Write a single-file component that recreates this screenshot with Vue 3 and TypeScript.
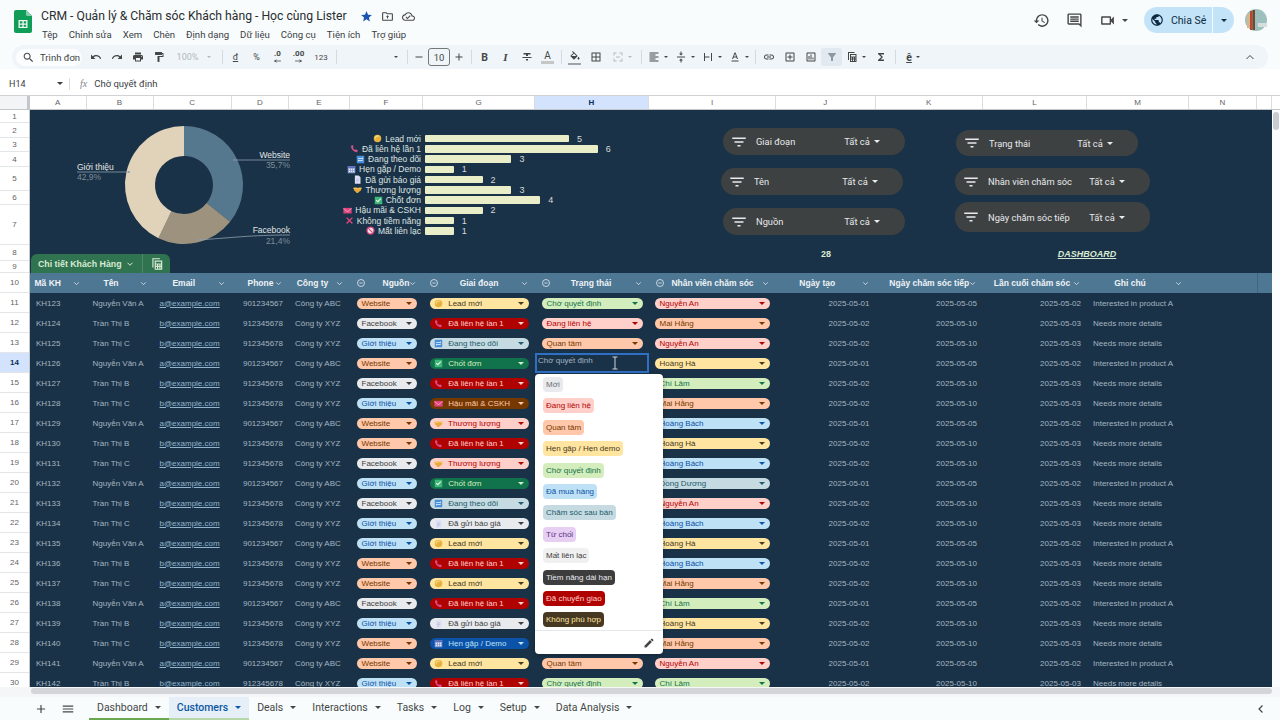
<script setup lang="ts">
import { computed } from "vue";

interface ToolItem {
  icon?: string;
  text?: string;
  caret?: boolean;
  sep?: boolean;
  width?: number;
  cls?: string;
  arrow?: string;
}

interface Customer {
  id: string;
  name: string;
  who: "A" | "B" | "C";
  source: string;
  stage: string;
  status: string;
  staff: string;
}

const icons: Record<string, string> = {
  search: "M15.5 14h-.79l-.28-.27C15.41 12.59 16 11.11 16 9.5 16 5.91 13.09 3 9.5 3S3 5.91 3 9.5 5.91 16 9.5 16c1.61 0 3.09-.59 4.23-1.57l.27.28v.79l5 4.99L20.49 19l-4.99-5zm-6 0C7.01 14 5 11.99 5 9.5S7.01 5 9.5 5 14 7.01 14 9.5 11.99 14 9.5 14z",
  undo: "M12.5 8c-2.65 0-5.05.99-6.9 2.6L2 7v9h9l-3.62-3.62c1.39-1.16 3.16-1.88 5.12-1.88 3.54 0 6.55 2.31 7.6 5.5l2.37-.78C21.08 11.03 17.15 8 12.5 8z",
  redo: "M18.4 10.6C16.55 8.99 14.15 8 11.5 8c-4.65 0-8.58 3.03-9.96 7.22L3.9 16c1.05-3.19 4.05-5.5 7.6-5.5 1.95 0 3.73.72 5.12 1.88L13 16h9V7l-3.6 3.6z",
  print: "M19 8H5c-1.66 0-3 1.34-3 3v6h4v4h12v-4h4v-6c0-1.66-1.34-3-3-3zm-3 11H8v-5h8v5zm3-7c-.55 0-1-.45-1-1s.45-1 1-1 1 .45 1 1-.45 1-1 1zm-1-9H6v4h12V3z",
  paint: "M18 4V3c0-.55-.45-1-1-1H5c-.55 0-1 .45-1 1v4c0 .55.45 1 1 1h12c.55 0 1-.45 1-1V6h1v4H9v11c0 .55.45 1 1 1h2c.55 0 1-.45 1-1v-9h8V4h-3z",
  star: "M12 17.27L18.18 21l-1.64-7.03L22 9.24l-7.19-.61L12 2 9.19 8.63 2 9.24l5.46 4.73L5.82 21z",
  folder: "M20 6h-8l-2-2H4c-1.1 0-2 .9-2 2v12c0 1.1.9 2 2 2h16c1.1 0 2-.9 2-2V8c0-1.1-.9-2-2-2zm0 12H4V6h5.17l2 2H20v10zM12 9.5l-3 3h2v3h2v-3h2z",
  cloud: "M19.35 10.04C18.67 6.59 15.64 4 12 4 9.11 4 6.6 5.64 5.35 8.04 2.34 8.36 0 10.91 0 14c0 3.31 2.69 6 6 6h13c2.76 0 5-2.24 5-5 0-2.64-2.05-4.78-4.65-4.96zM19 18H6c-2.21 0-4-1.79-4-4 0-2.05 1.53-3.76 3.56-3.97l1.07-.11.5-.95C8.08 7.14 9.94 6 12 6c2.62 0 4.88 1.86 5.39 4.43l.3 1.5 1.53.11c1.56.1 2.78 1.41 2.78 2.96 0 1.65-1.35 3-3 3zm-9-3.82l-2.09-2.09L6.5 13.5 10 17l6.01-6.01-1.41-1.41z",
  history: "M13 3c-4.97 0-9 4.03-9 9H1l3.89 3.89.07.14L9 12H6c0-3.87 3.13-7 7-7s7 3.13 7 7-3.13 7-7 7c-1.93 0-3.68-.79-4.94-2.06l-1.42 1.42C8.27 19.99 10.51 21 13 21c4.97 0 9-4.03 9-9s-4.03-9-9-9zm-1 5v5l4.28 2.54.72-1.21-3.5-2.08V8H12z",
  comment: "M21.99 4c0-1.1-.89-2-1.99-2H4c-1.1 0-2 .9-2 2v12c0 1.1.9 2 2 2h14l4 4-.01-18zM20 4v13.17L18.83 16H4V4h16zM6 12h12v2H6zm0-3h12v2H6zm0-3h12v2H6z",
  video: "M15 8v8H5V8h10m1-2H4c-.55 0-1 .45-1 1v10c0 .55.45 1 1 1h12c.55 0 1-.45 1-1v-3.5l4 4v-11l-4 4V7c0-.55-.45-1-1-1z",
  globe: "M12 2C6.48 2 2 6.48 2 12s4.48 10 10 10 10-4.48 10-10S17.52 2 12 2zm-1 17.93c-3.95-.49-7-3.85-7-7.93 0-.62.08-1.21.21-1.79L9 15v1c0 1.1.9 2 2 2v1.93zm6.9-2.54c-.26-.81-1-1.39-1.9-1.39h-1v-3c0-.55-.45-1-1-1H8v-2h2c.55 0 1-.45 1-1V7h2c1.1 0 2-.9 2-2v-.41c2.93 1.19 5 4.06 5 7.41 0 2.08-.8 3.97-2.1 5.39z",
  minus: "M19 13H5v-2h14v2z",
  plus: "M19 13h-6v6h-2v-6H5v-2h6V5h2v6h6v2z",
  strike: "M10 19h4v-3h-4v3zM5 4v3h5v3h4V7h5V4H5zM3 14h18v-2H3v2z",
  fill: "M16.56 8.94L7.62 0 6.21 1.41l2.38 2.38-5.15 5.15c-.59.59-.59 1.54 0 2.12l5.5 5.5c.29.29.68.44 1.06.44s.77-.15 1.06-.44l5.5-5.5c.59-.58.59-1.53 0-2.12zM5.21 10L10 5.21 14.79 10H5.21zM19 11.5s-2 2.17-2 3.5c0 1.1.9 2 2 2s2-.9 2-2c0-1.33-2-3.5-2-3.5z",
  borders: "M3 3v18h18V3H3zm8 16H5v-6h6v6zm0-8H5V5h6v6zm8 8h-6v-6h6v6zm0-8h-6V5h6v6z",
  merge: "M3 3h6v2H5v4H3zm12 0h6v6h-2V5h-4zM3 15h2v4h4v2H3zm16 0h2v6h-6v-2h4zM8 11h8v2H8z",
  align: "M15 15H3v2h12v-2zm0-8H3v2h12V7zM3 13h18v-2H3v2zm0 8h18v-2H3v2zM3 3v2h18V3H3z",
  valign: "M8 19h3v4h2v-4h3l-4-4-4 4zm8-14h-3V1h-2v4H8l4 4 4-4zM4 11v2h16v-2H4z",
  wrap: "M4 4h2v16H4zm14 0h2v16h-2zM6 11h9v2H6z",
  rotate: "M11 3h2l5 13h-2.1l-1.1-3H9.2l-1.1 3H6zm-1.1 8h4.2L12 5.6zM5 19h14v2H5z",
  link: "M3.9 12c0-1.71 1.39-3.1 3.1-3.1h4V7H7c-2.76 0-5 2.24-5 5s2.24 5 5 5h4v-1.9H7c-1.71 0-3.1-1.39-3.1-3.1zM8 13h8v-2H8v2zm9-6h-4v1.9h4c1.71 0 3.1 1.39 3.1 3.1s-1.39 3.1-3.1 3.1h-4V17h4c2.76 0 5-2.24 5-5s-2.24-5-5-5z",
  addbox: "M19 3H5c-1.1 0-2 .9-2 2v14c0 1.1.9 2 2 2h14c1.1 0 2-.9 2-2V5c0-1.1-.9-2-2-2zm0 16H5V5h14v14zM13 7h-2v4H7v2h4v4h2v-4h4v-2h-4z",
  chart: "M19 3H5c-1.1 0-2 .9-2 2v14c0 1.1.9 2 2 2h14c1.1 0 2-.9 2-2V5c0-1.1-.9-2-2-2zm0 16H5V5h14v14zM7 10h2v7H7zm4-3h2v10h-2zm4 6h2v4h-2z",
  funnel: "M4.25 5.61C6.27 8.2 10 13 10 13v6c0 .55.45 1 1 1h2c.55 0 1-.45 1-1v-6s3.72-4.8 5.74-7.39C20.25 4.95 19.78 4 18.95 4H5.04c-.83 0-1.3.95-.79 1.61z",
  table: "M4 2h13v2H6v14H4zm4 4h13v16H8zm2 2v3h9V8zm0 5v2h2v-2zm4 0v2h2v-2zm4 0v2h1v-2zm-8 4v3h2v-3zm4 0v3h2v-3zm4 0v3h1v-3z",
  sigma: "M18 4H6v2l6.5 6L6 18v2h12v-3h-7l5-5-5-5h7z",
  filterList: "M10 18h4v-2h-4v2zM3 6v2h18V6H3zm3 7h12v-2H6v2z",
  menu: "M3 18h18v-2H3v2zm0-5h18v-2H3v2zm0-7v2h18V6H3z",
  edit: "M3 17.25V21h3.75L17.81 9.94l-3.75-3.75L3 17.25zM20.71 7.04c.39-.39.39-1.02 0-1.41l-2.34-2.34c-.39-.39-1.02-.39-1.41 0l-1.83 1.83 3.75 3.75 1.83-1.83z",
};

const toolbarItems: ToolItem[] = [
  { icon: "undo" }, { icon: "redo" }, { icon: "print" }, { icon: "paint" },
  { text: "100%", width: 50, cls: "dim wide-gap", caret: true }, { sep: true },
  { text: "đ", cls: "under" }, { text: "%" }, { text: ".0", cls: "dec", arrow: "M4 2L1.500 3.500 4 5M1.500 3.500H9" }, { text: ".00", cls: "dec", arrow: "M6 2L8.500 3.500 6 5M8.500 3.500H1" }, { text: "123", cls: "small", width: 24 }, { sep: true },
  { width: 65, cls: "font-pick", caret: true }, { sep: true },
  { icon: "minus", width: 18 }, { text: "10", cls: "size" }, { icon: "plus", width: 18 }, { sep: true },
  { text: "B", cls: "bold" }, { text: "I", cls: "ital" }, { icon: "strike" }, { text: "A", cls: "color" }, { sep: true },
  { icon: "fill", cls: "filled" }, { icon: "borders" }, { icon: "merge", cls: "dim", caret: true, width: 32 }, { sep: true },
  { icon: "align", caret: true, width: 27 }, { icon: "valign", caret: true, width: 27 }, { icon: "wrap", caret: true, width: 27 }, { icon: "rotate", caret: true, width: 27 }, { sep: true },
  { icon: "link" }, { icon: "addbox" }, { icon: "chart" }, { icon: "funnel", cls: "on" }, { icon: "table", caret: true, width: 27 }, { icon: "sigma", width: 23 }, { sep: true },
  { text: "ê", cls: "bold under", caret: true, width: 30 },
];

const menus = ["Tệp", "Chỉnh sửa", "Xem", "Chèn", "Định dạng", "Dữ liệu", "Công cụ", "Tiện ích", "Trợ giúp"];
const columnLetters = ["A", "B", "C", "D", "E", "F", "G", "H", "I", "J", "K", "L", "M", "N", ""];
const dashRowHeights = [13, 15, 14, 15, 24, 14, 40, 16, 12];

// shift: độ lệch của nhãn so với giữa cột
const headers = [
  { label: "Mã KH", shift: -10.5 },
  { label: "Tên", shift: -9 },
  { label: "Email", shift: -9 },
  { label: "Phone", shift: 0 },
  { label: "Công ty", shift: -7 },
  { label: "Nguồn", chip: true, shift: 9.5 },
  { label: "Giai đoạn", chip: true, shift: 0 },
  { label: "Trạng thái", chip: true, shift: -1 },
  { label: "Nhân viên chăm sóc", chip: true, shift: 0 },
  { label: "Ngày tạo", shift: -8.5 },
  { label: "Ngày chăm sóc tiếp", shift: 0 },
  { label: "Lần cuối chăm sóc", shift: -3 },
  { label: "Ghi chú", shift: -8 },
];

// nhãn màu của dropdown, giống bảng màu mặc định của Sheets
const tones: Record<string, string> = {
  Website: "orange", Facebook: "grey", "Giới thiệu": "blue",
  "Lead mới": "yellow", "Đã liên hệ lần 1": "dred", "Đang theo dõi": "teal", "Hẹn gặp / Demo": "dblue",
  "Đã gửi báo giá": "grey", "Thương lượng": "red", "Chốt đơn": "dgreen", "Hậu mãi & CSKH": "brown",
  "Chờ quyết định": "green", "Đang liên hệ": "red", "Quan tâm": "orange",
  "Nguyễn An": "red", "Mai Hằng": "orange", "Hoàng Hà": "yellow", "Chí Lâm": "green", "Hoàng Bách": "blue", "Đồng Dương": "teal",
};

const glyphs: Record<string, { d: string; fill: string }[]> = {
  "Lead mới": [{ d: "M12 2a10 10 0 1 0 0 20 10 10 0 0 0 0-20z", fill: "#e8b13e" }, { d: "M9 4a8 8 0 0 1 9 3 9 9 0 0 0-12 8 8 8 0 0 1 3-11z", fill: "#f6d77c" }],
  "Đã liên hệ lần 1": [{ d: "M6.6 2.5l3 5-2 2.4c1.2 2.6 3.3 4.9 6 6.3l2.4-2 5 3-1.6 4c-.4.6-1 .8-1.8.7C10.400 20.600 3.500 13.500 2.600 6.400c-.1-.8.1-1.400.8-1.800z", fill: "#d6508c" }],
  "Đang theo dõi": [{ d: "M2 2h20v20H2z", fill: "#4a90d9" }, { d: "M6 8h10V6l3 3-3 3v-2H6zm12 8H8v2l-3-3 3-3v2h10z", fill: "#eef5fc" }],
  "Hẹn gặp / Demo": [{ d: "M2 3h20v19H2z", fill: "#8e9fd8" }, { d: "M2 3h20v5H2z", fill: "#5c6fb8" }, { d: "M5 10h3v3H5zm5.500 0h3v3h-3zM16 10h3v3h-3zM5 15.500h3v3H5zm5.500 0h3v3h-3zm5.500 0h3v3h-3z", fill: "#eef0fa" }],
  "Đã gửi báo giá": [{ d: "M5 1h10l5 5v17H5z", fill: "#dfe1f5" }, { d: "M8 10h9v1.500H8zm0 4h9v1.500H8zm0 4h6v1.500H8z", fill: "#a7acd8" }],
  "Thương lượng": [{ d: "M1 7h22l-2 7-8 7h-3l-7-7z", fill: "#e9a93a" }, { d: "M1 7h9l3 3 3-3h7l-1 3H2z", fill: "#f6cd6a" }],
  "Chốt đơn": [{ d: "M2 2h20v20H2z", fill: "#3fb878" }, { d: "M10 17l-5-5 1.800-1.800L10 13.400 17.200 6.200 19 8z", fill: "#f3fbf6" }],
  "Hậu mãi & CSKH": [{ d: "M1 5h22v15H1z", fill: "#e0457f" }, { d: "M1 5l11 9 11-9v2.500l-11 9-11-9z", fill: "#f6a3c3" }],
  "Không tiềm năng": [{ d: "M3 5.500L5.500 3 12 9.500 18.500 3 21 5.500 14.500 12 21 18.500 18.500 21 12 14.500 5.500 21 3 18.500 9.500 12z", fill: "#d9467f" }],
  "Mất liên lạc": [{ d: "M12 1a11 11 0 1 0 0 22 11 11 0 0 0 0-22z", fill: "#d9467f" }, { d: "M12 4.500A7.500 7.500 0 1 1 12 19.500 7.500 7.500 0 0 1 12 4.500z", fill: "#f6e3ea" }, { d: "M7.500 5.500L18.500 16.500 16.500 18.500 5.500 7.500z", fill: "#d9467f" }],
};

const barData = [
  { label: "Lead mới", value: 5 },
  { label: "Đã liên hệ lần 1", value: 6 },
  { label: "Đang theo dõi", value: 3 },
  { label: "Hẹn gặp / Demo", value: 1 },
  { label: "Đã gửi báo giá", value: 2 },
  { label: "Thương lượng", value: 3 },
  { label: "Chốt đơn", value: 4 },
  { label: "Hậu mãi & CSKH", value: 2 },
  { label: "Không tiềm năng", value: 1 },
  { label: "Mất liên lạc", value: 1 },
];

const filtersLeft = [
  { label: "Giai đoạn", cls: "shift" },
  { label: "Tên", cls: "" },
  { label: "Nguồn", cls: "shift" },
];
const filtersRight = [
  { label: "Trạng thái", cls: "short" },
  { label: "Nhân viên chăm sóc", cls: "wide" },
  { label: "Ngày chăm sóc tiếp", cls: "wide tall" },
];

const statusOptions = [
  { label: "Mới", tone: "grey" },
  { label: "Đang liên hệ", tone: "red" },
  { label: "Quan tâm", tone: "orange" },
  { label: "Hẹn gặp / Hẹn demo", tone: "yellow" },
  { label: "Chờ quyết định", tone: "green" },
  { label: "Đã mua hàng", tone: "blue" },
  { label: "Chăm sóc sau bán", tone: "teal" },
  { label: "Từ chối", tone: "purple" },
  { label: "Mất liên lạc", tone: "light" },
  { label: "Tiềm năng dài hạn", tone: "dark" },
  { label: "Đã chuyển giao", tone: "dred" },
  { label: "Không phù hợp", tone: "dbrown" },
];

const raw: [string, string, string, string][] = [
  ["Website", "Lead mới", "Chờ quyết định", "Nguyễn An"],
  ["Facebook", "Đã liên hệ lần 1", "Đang liên hệ", "Mai Hằng"],
  ["Giới thiệu", "Đang theo dõi", "Quan tâm", "Nguyễn An"],
  ["Website", "Chốt đơn", "", "Hoàng Hà"],
  ["Facebook", "Đã liên hệ lần 1", "", "Chí Lâm"],
  ["Giới thiệu", "Hậu mãi & CSKH", "", "Mai Hằng"],
  ["Website", "Thương lượng", "", "Hoàng Bách"],
  ["Website", "Đã liên hệ lần 1", "", "Hoàng Hà"],
  ["Facebook", "Thương lượng", "", "Hoàng Bách"],
  ["Giới thiệu", "Chốt đơn", "", "Đồng Dương"],
  ["Facebook", "Đang theo dõi", "", "Nguyễn An"],
  ["Giới thiệu", "Đã gửi báo giá", "", "Hoàng Bách"],
  ["Giới thiệu", "Lead mới", "", "Hoàng Hà"],
  ["Website", "Đã liên hệ lần 1", "", "Hoàng Bách"],
  ["Website", "Lead mới", "", "Mai Hằng"],
  ["Facebook", "Đã liên hệ lần 1", "", "Chí Lâm"],
  ["Giới thiệu", "Đã gửi báo giá", "", "Hoàng Hà"],
  ["Website", "Hẹn gặp / Demo", "", "Mai Hằng"],
  ["Website", "Lead mới", "Quan tâm", "Nguyễn An"],
  ["Giới thiệu", "Đã liên hệ lần 1", "Chờ quyết định", "Chí Lâm"],
];

const people = { A: "Nguyễn Văn A", B: "Trần Thị B", C: "Trần Thị C" };
const whoOrder: Customer["who"][] = ["A", "B", "C"];

const customers = computed<Customer[]>(() =>
  raw.map((r, i) => ({
    id: `KH${123 + i}`,
    who: whoOrder[i % 3],
    name: people[whoOrder[i % 3]],
    source: r[0],
    stage: r[1],
    status: r[2],
    staff: r[3],
  }))
);

const tabs = ["Dashboard", "Customers", "Deals", "Interactions", "Tasks", "Log", "Setup", "Data Analysis"];

// donut: 14 khách, bắt đầu từ 12 giờ theo chiều kim đồng hồ
const slices = computed(() => {
  const parts = [
    { value: 5, color: "#56788f" },
    { value: 3, color: "#9c927e" },
    { value: 6, color: "#e0d3ba" },
  ];
  const cx = 154, cy = 75, R = 59, r = 29;
  let acc = 0;
  return parts.map((p) => {
    const a0 = (acc / 14) * Math.PI * 2;
    acc += p.value;
    const a1 = (acc / 14) * Math.PI * 2;
    const large = a1 - a0 > Math.PI ? 1 : 0;
    const pt = (rad: number, a: number) => `${(cx + rad * Math.sin(a)).toFixed(2)} ${(cy - rad * Math.cos(a)).toFixed(2)}`;
    return {
      color: p.color,
      d: `M${pt(R, a0)}A${R} ${R} 0 ${large} 1 ${pt(R, a1)}L${pt(r, a1)}A${r} ${r} 0 ${large} 0 ${pt(r, a0)}Z`,
    };
  });
});
</script>

<template>
  <div class="app">
    <header class="topbar">
      <svg class="logo" viewBox="0 0 18 23">
        <path d="M2 0h10l6 6v15a2 2 0 0 1-2 2H2a2 2 0 0 1-2-2V2a2 2 0 0 1 2-2z" fill="#0f9d58" />
        <path d="M12 0l6 6h-4.500A1.500 1.500 0 0 1 12 4.500z" fill="#87ceac" />
        <path d="M4.500 10h9v8h-9zm1.300 1.300v2.100h2.600v-2.100zm3.900 0v2.100h2.500v-2.100zm-3.900 3.400v2h2.600v-2zm3.900 0v2h2.500v-2z" fill="#f1f8f4" />
      </svg>
      <div class="doc">
        <div class="title-line">
          <span class="doc-title">CRM - Quản lý &amp; Chăm sóc Khách hàng - Học cùng Lister</span>
          <svg class="ic star" viewBox="0 0 24 24"><path :d="icons.star" /></svg>
          <svg class="ic doc-ic" viewBox="0 0 24 24"><path :d="icons.folder" /></svg>
          <svg class="ic doc-ic" viewBox="0 0 24 24"><path :d="icons.cloud" /></svg>
        </div>
        <nav class="menus">
          <span v-for="m in menus" :key="m">{{ m }}</span>
        </nav>
      </div>
      <div class="top-actions">
        <svg class="ic act" viewBox="0 0 24 24"><path :d="icons.history" /></svg>
        <svg class="ic act" viewBox="0 0 24 24"><path :d="icons.comment" /></svg>
        <span class="video">
          <svg class="ic act" viewBox="0 0 24 24"><path :d="icons.video" /></svg>
          <i class="caret"></i>
        </span>
        <div class="share">
          <svg class="ic" viewBox="0 0 24 24"><path :d="icons.globe" /></svg>
          <span class="share-label">Chia Sẻ</span>
          <span class="share-drop"><i class="caret"></i></span>
        </div>
        <svg class="avatar" viewBox="0 0 22 22">
          <circle cx="11" cy="11" r="11" fill="#9cc0bd" />
          <path d="M2 5h3v14H2z" fill="#d8b48c" />
          <path d="M5 2h2.500v19H5z" fill="#b5482f" />
          <path d="M7.500 1H10v20H7.500z" fill="#6e4a35" />
          <path d="M13 14h9v4h-9z" fill="#d6dfdc" />
        </svg>
      </div>
    </header>

    <div class="toolbar">
      <div class="tb-search">
        <svg class="ic" viewBox="0 0 24 24"><path :d="icons.search" /></svg>
        <span>Trình đơn</span>
      </div>
      <template v-for="(t, i) in toolbarItems" :key="i">
        <span v-if="t.sep" class="tb-sep"></span>
        <span v-else class="tb-btn" :class="t.cls" :style="t.width ? { width: t.width + 'px' } : undefined">
          <svg v-if="t.icon" class="ic" viewBox="0 0 24 24"><path :d="icons[t.icon]" /></svg>
          <span v-if="t.text" class="tb-text">{{ t.text }}</span>
          <svg v-if="t.arrow" class="tb-arrow" viewBox="0 0 10 7"><path :d="t.arrow" /></svg>
          <i v-if="t.caret" class="caret"></i>
        </span>
      </template>
      <svg class="collapse" viewBox="0 0 12 12"><path d="M2.500 8L6 4.500 9.500 8" /></svg>
    </div>

    <div class="formula">
      <div class="name-box">H14 <i class="caret"></i></div>
      <span class="fx">fx</span>
      <span class="formula-text">Chờ quyết định</span>
    </div>

    <div class="col-letters">
      <div class="corner"></div>
      <div class="sheet-grid letters">
        <div v-for="(c, i) in columnLetters" :key="i" class="letter" :class="{ current: c === 'H' }">{{ c }}</div>
      </div>
      <div class="bar-gap"></div>
    </div>

    <div class="sheet">
      <div class="row-heads">
        <div
          v-for="(h, i) in dashRowHeights"
          :key="i"
          class="row-no"
          :style="{ height: h + 'px' }"
        >{{ i + 1 }}</div>
        <div
          v-for="n in 21"
          :key="'r' + n"
          class="row-no tall"
          :class="{ current: n + 9 === 14 }"
        >{{ n + 9 }}</div>
      </div>

      <main class="canvas">
        <section class="dashboard">
          <div class="dash-top">
            <svg class="donut" viewBox="0 0 310 135">
              <path v-for="s in slices" :key="s.color" :d="s.d" :fill="s.color" />
              <path class="lead" d="M203 50H260" />
              <path class="lead" d="M167 130C200 128 220 125 260 125" />
              <path class="lead" d="M99 62H47" />
              <circle cx="99" cy="62" r="1" fill="#8ea0ad" />
              <text class="pie-name" x="260" y="48" text-anchor="end">Website</text>
              <text class="pie-pct" x="260" y="58" text-anchor="end">35,7%</text>
              <text class="pie-name" x="260" y="123" text-anchor="end">Facebook</text>
              <text class="pie-pct" x="260" y="134" text-anchor="end">21,4%</text>
              <text class="pie-name" x="47" y="60">Giới thiệu</text>
              <text class="pie-pct" x="47" y="70">42,9%</text>
            </svg>

            <div class="bars">
              <div v-for="b in barData" :key="b.label" class="bar-row">
                <span class="bar-label">
                  <svg class="glyph" viewBox="0 0 24 24"><path v-for="g in glyphs[b.label]" :key="g.d" :d="g.d" :fill="g.fill" /></svg>
                  {{ b.label }}
                </span>
                <span class="bar" :style="{ width: b.value * 28.8 + 'px' }"></span>
                <span class="bar-value">{{ b.value }}</span>
              </div>
            </div>

            <div class="filters left">
              <div v-for="f in filtersLeft" :key="f.label" class="filter" :class="f.cls">
                <svg class="ic" viewBox="0 0 24 24"><path :d="icons.filterList" /></svg>
                <span class="filter-label">{{ f.label }}</span>
                <span class="filter-value">Tất cả <i class="caret"></i></span>
              </div>
            </div>
            <div class="filters right">
              <div v-for="f in filtersRight" :key="f.label" class="filter" :class="f.cls">
                <svg class="ic" viewBox="0 0 24 24"><path :d="icons.filterList" /></svg>
                <span class="filter-label">{{ f.label }}</span>
                <span class="filter-value">Tất cả <i class="caret"></i></span>
              </div>
            </div>
          </div>

          <div class="dash-foot">
            <div class="table-tab">
              <span class="table-name">Chi tiết Khách Hàng</span>
              <svg class="tab-chev" viewBox="0 0 12 12"><path d="M3 4.500L6 7.500 9 4.500" /></svg>
              <span class="tab-tool">
                <svg class="ic" viewBox="0 0 24 24"><path :d="icons.table" /></svg>
              </span>
            </div>
            <span class="count">28</span>
            <span class="dash-link">DASHBOARD</span>
          </div>
        </section>

        <div class="sheet-grid head-row">
          <div
            v-for="h in headers"
            :key="h.label"
            class="head-cell"
            :style="{ paddingLeft: 15 + h.shift + 'px', paddingRight: 15 - h.shift + 'px' }"
          >
            <svg v-if="h.chip" class="chip-ic" viewBox="0 0 12 12">
              <circle cx="6" cy="6" r="4.200" />
              <path d="M4 6h4" />
            </svg>
            <span class="head-label">{{ h.label }}</span>
            <svg class="head-chev" viewBox="0 0 12 12"><path d="M3 4.500L6 7.500 9 4.500" /></svg>
          </div>
          <div class="head-cell"></div>
          <div class="head-cell edge"></div>
        </div>

        <div v-for="(c, i) in customers" :key="c.id" class="sheet-grid data-row">
          <div class="cell">{{ c.id }}</div>
          <div class="cell">{{ c.name }}</div>
          <div class="cell mail">{{ c.who === "A" ? "a" : "b" }}@example.com</div>
          <div class="cell num">{{ c.who === "A" ? "901234567" : "912345678" }}</div>
          <div class="cell">{{ c.who === "A" ? "Công ty ABC" : "Công ty XYZ" }}</div>
          <div class="cell pill-cell">
            <span class="pill" :class="tones[c.source]">{{ c.source }}<i class="caret"></i></span>
          </div>
          <div class="cell pill-cell">
            <span class="pill with-glyph" :class="tones[c.stage]">
              <svg class="glyph" viewBox="0 0 24 24"><path v-for="g in glyphs[c.stage]" :key="g.d" :d="g.d" :fill="g.fill" /></svg>
              {{ c.stage }}<i class="caret"></i>
            </span>
          </div>
          <div class="cell pill-cell" :class="{ editing: i === 3 }">
            <template v-if="i === 3">
              <span class="edit-text">Chờ quyết định</span>
              <svg class="ibeam" viewBox="0 0 8 14"><path d="M1.500 1h5M4 1v12M1.500 13h5" /></svg>
              <div class="dropdown">
                <div class="options">
                  <span v-for="o in statusOptions" :key="o.label" class="option" :class="o.tone">{{ o.label }}</span>
                </div>
                <div class="dropdown-foot">
                  <svg class="ic" viewBox="0 0 24 24"><path :d="icons.edit" /></svg>
                </div>
              </div>
            </template>
            <span v-else-if="c.status" class="pill" :class="tones[c.status]">{{ c.status }}<i class="caret"></i></span>
          </div>
          <div class="cell pill-cell staff">
            <span class="pill" :class="tones[c.staff]">{{ c.staff }}<i class="caret"></i></span>
          </div>
          <div class="cell num">{{ c.who === "A" ? "2025-05-01" : "2025-05-02" }}</div>
          <div class="cell num">{{ c.who === "A" ? "2025-05-05" : "2025-05-10" }}</div>
          <div class="cell num">{{ c.who === "A" ? "2025-05-02" : "2025-05-03" }}</div>
          <div class="cell">{{ c.who === "A" ? "Interested in product A" : "Needs more details" }}</div>
          <div class="cell"></div>
          <div class="cell"></div>
        </div>
      </main>

      <aside class="v-scroll"><span class="v-thumb"></span></aside>
    </div>

    <div class="h-scroll"><span class="h-thumb"></span></div>

    <footer class="tabbar">
      <svg class="ic tab-act" viewBox="0 0 24 24"><path :d="icons.plus" /></svg>
      <svg class="ic tab-act" viewBox="0 0 24 24"><path :d="icons.menu" /></svg>
      <div class="tabs">
        <div v-for="t in tabs" :key="t" class="tab" :class="t.toLowerCase().replace(' ', '-')">
          {{ t }}<i class="caret"></i>
        </div>
      </div>
      <svg class="tab-back" viewBox="0 0 12 12"><path d="M7.500 2.500L4 6l3.500 3.500" /></svg>
    </footer>
  </div>
</template>

<style scoped>
.app {
  width: 1280px;
  height: 720px;
  display: flex;
  flex-direction: column;
  overflow: hidden;
  background: #f8fcfd;
  font-family: "Liberation Sans", Arial, sans-serif;
  color: #444746;
}

.ic {
  width: 14px;
  height: 14px;
  fill: currentColor;
  flex: none;
}

.caret {
  display: inline-block;
  width: 0;
  height: 0;
  border-left: 3px solid transparent;
  border-right: 3px solid transparent;
  border-top: 3px solid currentColor;
  flex: none;
}

/* phần đầu trang */
.topbar {
  height: 45px;
  flex: none;
  display: flex;
  align-items: flex-start;
  padding: 10px 13px 0 14px;
  box-sizing: border-box;
}

.logo {
  width: 18px;
  height: 23px;
  flex: none;
}

.doc {
  margin-left: 9px;
  margin-top: -3px;
}

.title-line {
  display: flex;
  align-items: center;
  height: 18px;
}

.doc-title {
  font: 12.200px Roboto, sans-serif;
  color: #2a2d30;
  margin-right: 12px;
  width: 307px;
  white-space: nowrap;
}

.star {
  color: #1a56b0;
  width: 13px;
  height: 13px;
  margin-right: 8px;
}

.doc-ic {
  width: 13px;
  height: 13px;
  margin-right: 8px;
}

.menus {
  display: flex;
  gap: 11px;
  margin-top: 4px;
  margin-left: 1px;
  font: 9.600px Roboto, sans-serif;
  color: #3c4043;
}

.top-actions {
  margin-left: auto;
  display: flex;
  align-items: center;
  margin-top: -3px;
}

.act {
  width: 17px;
  height: 17px;
  margin-right: 16px;
}

.video {
  display: flex;
  align-items: center;
  margin-right: 16px;
}

.video .act {
  margin-right: 6px;
}

.share {
  width: 90px;
  height: 26px;
  border-radius: 13px;
  background: #c3e4f8;
  color: #0d2a42;
  display: flex;
  align-items: center;
  padding-left: 6px;
  box-sizing: border-box;
  margin-right: 11px;
  font: 10.500px Roboto, sans-serif;
}

.share-label {
  margin-left: 7px;
  width: 41px;
  white-space: nowrap;
}

.share-drop {
  flex: 1;
  height: 100%;
  border-left: 1px solid #f2fafe;
  display: flex;
  align-items: center;
  justify-content: center;
}

.avatar {
  width: 22px;
  height: 22px;
  flex: none;
}

/* thanh công cụ */
.toolbar {
  height: 24px;
  flex: none;
  margin: 0 12px;
  padding-left: 4px;
  background: #eff5f8;
  border-radius: 12px;
  display: flex;
  align-items: center;
}

.tb-search {
  width: 66px;
  height: 17px;
  border-radius: 9px;
  background: #fbfdfe;
  display: flex;
  align-items: center;
  gap: 5px;
  padding-left: 6px;
  box-sizing: border-box;
  font: 9.500px Roboto, sans-serif;
  margin-right: 3px;
  overflow: hidden;
  white-space: nowrap;
  flex: none;
}

.tb-search .ic {
  width: 13px;
  height: 13px;
}

.tb-btn {
  width: 21px;
  height: 18px;
  display: flex;
  align-items: center;
  justify-content: center;
  gap: 4px;
  flex: none;
  font: 9px Roboto, sans-serif;
  border-radius: 3px;
  box-sizing: border-box;
}

.tb-btn .ic {
  width: 12px;
  height: 12px;
}

.tb-btn .caret {
  border-left-width: 2.500px;
  border-right-width: 2.500px;
  border-top-width: 2.500px;
}

.tb-sep {
  width: 1px;
  height: 14px;
  margin: 0 2.500px;
  background: #d5dadf;
  flex: none;
}

.tb-btn.dim {
  color: #b4b9bd;
}

.tb-btn.wide-gap {
  gap: 9px;
}

.tb-btn.font-pick {
  justify-content: flex-end;
  padding-right: 6px;
}

.tb-btn.under .tb-text {
  text-decoration: underline;
}

.tb-btn.dec {
  flex-direction: column;
  gap: 0;
  font-size: 8px;
  font-weight: 700;
  line-height: 8px;
}

.tb-arrow {
  width: 9px;
  height: 6px;
  fill: none;
  stroke: #444746;
  stroke-width: 0.900;
}

.tb-btn.small {
  font-size: 8px;
}

.tb-btn.size {
  width: 22px;
  border: 1px solid #747775;
  border-radius: 3px;
  font-size: 9.500px;
}

.tb-btn.bold {
  font-weight: 700;
  font-size: 10.500px;
}

.tb-btn.ital {
  font-style: italic;
  font-family: "Liberation Serif", serif;
  font-weight: 700;
  font-size: 11px;
}

.tb-btn.color {
  font-size: 10px;
  border-bottom: 3px solid #c4c7c5;
  height: 14px;
  width: 13px;
  margin: 0 4px;
  border-radius: 0;
}

.tb-btn.filled {
  position: relative;
}

.tb-btn.filled::after {
  content: "";
  position: absolute;
  left: 4px;
  right: 4px;
  bottom: 1px;
  height: 2px;
  background: #a0a4a8;
}

.tb-btn.on {
  background: #e2e9f0;
  color: #8d979f;
}

.collapse {
  margin-left: auto;
  margin-right: 12px;
  width: 12px;
  height: 12px;
  fill: none;
  stroke: #444746;
  stroke-width: 1;
}

/* ô công thức */
.formula {
  height: 26px;
  flex: none;
  background: #fff;
  display: flex;
  align-items: center;
  padding-top: 3px;
  box-sizing: border-box;
  font: 9.500px Roboto, sans-serif;
  color: #3c4043;
}

.name-box {
  width: 70px;
  padding-left: 9px;
  padding-right: 6px;
  box-sizing: border-box;
  display: flex;
  align-items: center;
  justify-content: space-between;
  height: 12px;
  border-right: 1px solid #dadce0;
  font-size: 9px;
}

.fx {
  font: italic 10px "Liberation Serif", serif;
  color: #80868b;
  margin-left: 10px;
  margin-right: 7px;
}

.col-letters {
  height: 15px;
  flex: none;
  display: flex;
  background: #fff;
  border-top: 1px solid #d0d3d6;
  border-bottom: 1px solid #c4c7c9;
  box-sizing: border-box;
}

.corner {
  width: 30px;
  flex: none;
  background: #f3f4f5;
  border-right: 3px solid #c4c7c9;
  box-sizing: border-box;
}

.bar-gap {
  flex: 1;
}

.sheet-grid {
  display: grid;
  grid-template-columns: 56.500px 67px 78.500px 57px 61px 73px 112px 114px 127px 99.500px 107.500px 104px 102px 68px 15px;
  width: 1242px;
  flex: none;
}

.letter {
  display: flex;
  align-items: center;
  justify-content: center;
  font-size: 8px;
  color: #5f6368;
  border-right: 1px solid #dadce0;
}

.letter.current {
  background: #d3e3fd;
  color: #0b2e5c;
  font-weight: 700;
}

/* vùng bảng */
.sheet {
  height: 577px;
  flex: none;
  display: flex;
  overflow: hidden;
}

.row-heads {
  width: 30px;
  flex: none;
  background: #fff;
  border-right: 1px solid #c4c7c9;
  box-sizing: border-box;
}

.row-no {
  display: flex;
  align-items: center;
  justify-content: center;
  font-size: 8px;
  color: #5f6368;
  border-bottom: 1px solid #e3e5e7;
  box-sizing: border-box;
}

.row-no.tall {
  height: 20px;
}

.row-no.current {
  background: #d3e3fd;
  color: #0b2e5c;
  font-weight: 700;
}

.canvas {
  width: 1242px;
  flex: none;
  background: #1a3247;
  overflow: hidden;
}

.v-scroll {
  flex: 1;
  background: #fbfcfd;
  padding: 2px 1px;
}

.v-thumb {
  display: block;
  width: 6px;
  height: 18px;
  border-radius: 3px;
  background: #c9ccd0;
}

.dashboard {
  height: 163px;
  display: flex;
  flex-direction: column;
}

.dash-top {
  height: 135px;
  flex: none;
  display: flex;
}

.donut {
  width: 310px;
  height: 135px;
  flex: none;
}

.lead {
  fill: none;
  stroke: #8ea0ad;
  stroke-width: 0.800;
}

.pie-name {
  font-size: 8.500px;
  fill: #e2e6e4;
}

.pie-pct {
  font-size: 8.500px;
  fill: #7f8e99;
}

.bars {
  width: 380px;
  flex: none;
  padding-top: 23.500px;
  box-sizing: border-box;
}

.bar-row {
  height: 10.250px;
  display: flex;
  align-items: center;
}

.bar-label {
  width: 81px;
  flex: none;
  display: flex;
  align-items: center;
  justify-content: flex-end;
  gap: 3px;
  font-size: 8.500px;
  color: #dfe4e2;
  white-space: nowrap;
  margin-right: 4px;
}

.bar-label .glyph {
  width: 9px;
  height: 9px;
}

.glyph {
  width: 9px;
  height: 9px;
  flex: none;
}

.bar {
  height: 7.500px;
  background: #e9eec8;
  border-radius: 1px;
  flex: none;
}

.bar-value {
  margin-left: 8px;
  font-size: 9px;
  color: #d6dcd8;
}

.filters {
  flex: none;
  display: flex;
  flex-direction: column;
}

.filters.left {
  width: 235px;
  padding-top: 18px;
  gap: 13px;
}

.filters.right {
  padding-top: 20px;
  gap: 12px;
}

.filter {
  width: 182px;
  height: 27px;
  border-radius: 14px;
  background: #3e4141;
  color: #e8eaed;
  display: flex;
  align-items: center;
  padding: 0 25px 0 7px;
  box-sizing: border-box;
  font: 9.300px Roboto, sans-serif;
  margin-left: 1px;
}

.filter.shift {
  margin-left: 3px;
}

.filter.short {
  height: 26px;
}

.filter.wide {
  width: 195px;
  margin-left: 0;
}

.filter.tall {
  height: 30px;
  margin-top: -5px;
}

.filter .ic {
  width: 18px;
  height: 18px;
}

.filter-label {
  flex: 1;
  margin-left: 8px;
  white-space: nowrap;
}

.filter-value {
  display: flex;
  align-items: center;
  gap: 2px;
  white-space: pre;
}

.dash-foot {
  flex: 1;
  display: flex;
}

.table-tab {
  width: 139px;
  height: 19px;
  margin-top: 9px;
  margin-left: 1px;
  flex: none;
  background: #2f7350;
  border-radius: 6px 6px 0 0;
  color: #d9ead3;
  display: flex;
  align-items: center;
  padding-left: 7px;
  box-sizing: border-box;
  font-size: 8.800px;
  font-weight: 700;
}

.table-name {
  white-space: nowrap;
  width: 87px;
}

.tab-chev {
  width: 10px;
  height: 10px;
  fill: none;
  stroke: #d9ead3;
  stroke-width: 1.200;
  flex: none;
}

.tab-tool {
  margin-left: 7px;
  height: 100%;
  flex: 1;
  border-left: 1px solid #4c8a69;
  display: flex;
  align-items: center;
  justify-content: center;
}

.tab-tool .ic {
  width: 14px;
  height: 14px;
}

.count {
  width: 100px;
  margin-left: 606px;
  text-align: center;
  font-size: 9px;
  font-weight: 700;
  color: #d9ead3;
  line-height: 18px;
  flex: none;
}

.dash-link {
  margin-left: 161px;
  width: 100px;
  text-align: center;
  font-size: 9px;
  font-weight: 700;
  font-style: italic;
  text-decoration: underline;
  color: #d9ead3;
  line-height: 18px;
  flex: none;
}

/* hàng tiêu đề */
.head-row {
  height: 20px;
  background: #4e7793;
}

.head-cell {
  position: relative;
  display: flex;
  align-items: center;
  justify-content: center;
  min-width: 0;
  box-sizing: border-box;
  font-size: 8.500px;
  font-weight: 700;
  color: #eef3f6;
  white-space: nowrap;
}

.head-cell.edge {
  border-left: 1px solid #3f6680;
}

.chip-ic {
  position: absolute;
  left: 6px;
  width: 10px;
  height: 10px;
  fill: none;
  stroke: #eef3f6;
  stroke-width: 0.900;
}

.head-chev {
  position: absolute;
  right: 6px;
  width: 9px;
  height: 9px;
  fill: none;
  stroke: #d5dfe6;
  stroke-width: 1.200;
}

/* dòng dữ liệu */
.data-row {
  height: 20px;
}

.cell {
  display: flex;
  align-items: center;
  padding: 0 6px;
  min-width: 0;
  box-sizing: border-box;
  font-size: 8px;
  color: #a3b5c1;
  white-space: nowrap;
}

.mail {
  text-decoration: underline;
  color: #90b4cd;
}

.num {
  justify-content: flex-end;
}

.pill-cell {
  position: relative;
  padding: 0 6px 0 7px;
}

.pill-cell.staff {
  padding-left: 6px;
}

.pill {
  width: 100%;
  height: 11px;
  border-radius: 6px;
  display: flex;
  align-items: center;
  padding: 0 5px 0 4.500px;
  box-sizing: border-box;
  gap: 3px;
  white-space: pre;
}

.pill .caret {
  margin-left: auto;
}

.with-glyph {
  padding-left: 4px;
  gap: 0;
}

.with-glyph .glyph {
  margin-right: 3px;
}

.orange { background: #ffc8aa; color: #753800; }
.grey { background: #e8eaed; color: #3d3d3d; }
.blue { background: #bfe1f6; color: #0a53a8; }
.yellow { background: #ffe5a0; color: #473821; }
.dred { background: #b10202; color: #ffcfc9; }
.teal { background: #c6dbe1; color: #215a6c; }
.dblue { background: #0a53a8; color: #bfe1f6; }
.red { background: #ffcfc9; color: #b10202; }
.dgreen { background: #11734b; color: #d4edbc; }
.brown { background: #753800; color: #ffc8aa; }
.green { background: #d4edbc; color: #11734b; }
.purple { background: #e6cff2; color: #5a3286; }
.light { background: #f0f0f0; color: #3d3d3d; }
.dark { background: #3d3d3d; color: #e8eaed; }
.dbrown { background: #473821; color: #ffe5a0; }

/* ô đang sửa và dropdown */
.editing {
  padding: 0 0 0 3px;
  outline: 2px solid #2f6fc4;
  outline-offset: -2px;
  z-index: 5;
}

.edit-text {
  margin-top: -6px;
  color: #a3b5c1;
}

.ibeam {
  position: absolute;
  left: 76px;
  top: 3px;
  width: 8px;
  height: 14px;
  fill: none;
  stroke: #dfe5ea;
  stroke-width: 0.900;
}

.dropdown {
  position: absolute;
  left: 0;
  top: 21px;
  width: 128px;
  height: 280px;
  background: #fff;
  border-radius: 4px;
  box-shadow: 0 1px 4px rgba(0, 0, 0, 0.3);
  display: flex;
  flex-direction: column;
}

.options {
  padding: 3px 8px 0;
  display: flex;
  flex-direction: column;
  align-items: flex-start;
  gap: 6.400px;
  height: 257px;
  box-sizing: border-box;
  border-bottom: 1px solid #e6e8ea;
}

.option {
  height: 15px;
  display: flex;
  align-items: center;
  padding: 0 3px;
  border-radius: 4px;
  font-size: 8px;
  flex: none;
}

.option.grey {
  color: #6b6f73;
}

.dropdown-foot {
  flex: 1;
  display: flex;
  align-items: center;
  justify-content: flex-end;
  padding-right: 8px;
  color: #444746;
}

.dropdown-foot .ic {
  width: 12px;
  height: 12px;
}

/* thanh cuộn ngang và tab */
.h-scroll {
  height: 10px;
  flex: none;
  padding: 1px 8px 0 31px;
  box-sizing: border-box;
  background: #f5f6f7;
}

.h-thumb {
  display: block;
  height: 6px;
  border-radius: 3px;
  background: #d3d6d9;
}

.tabbar {
  flex: 1;
  display: flex;
  align-items: center;
  padding-left: 34px;
  font: 10.500px Roboto, sans-serif;
  color: #444746;
}

.tab-act {
  width: 14px;
  height: 14px;
  margin-right: 13px;
}

.tabs {
  display: flex;
  align-self: stretch;
  margin-left: 1px;
}

.tab {
  display: flex;
  align-items: center;
  gap: 7px;
  padding: 0 8px;
  white-space: nowrap;
  box-sizing: border-box;
  border-bottom: 2px solid transparent;
}

.tab.dashboard {
  flex-direction: row;
  height: auto;
  border-bottom-color: #6aa84f;
}

.tab.customers {
  background: #e6eef7;
  color: #0b57a4;
  font-weight: 500;
  border-bottom-color: #b6d7a8;
}

.tab-back {
  margin-left: auto;
  margin-right: 13px;
  width: 12px;
  height: 12px;
  fill: none;
  stroke: #444746;
  stroke-width: 1.200;
}
</style>

<style>
html,
body {
  margin: 0;
  background: #f8fcfd;
}
</style>
